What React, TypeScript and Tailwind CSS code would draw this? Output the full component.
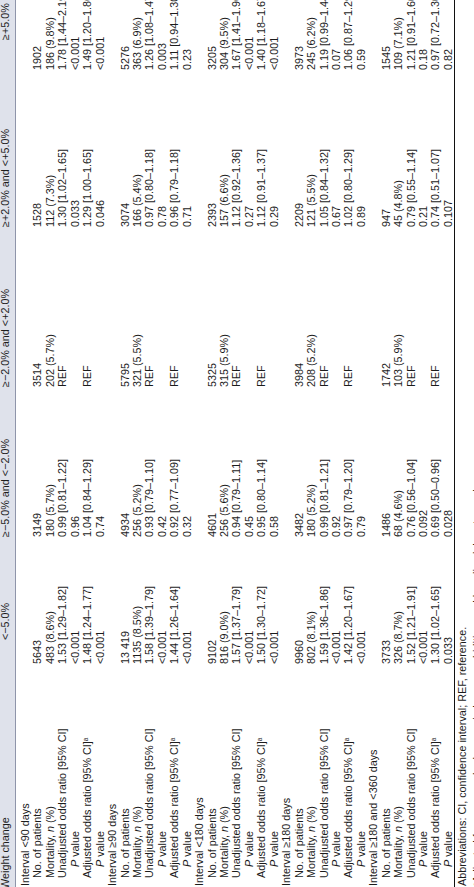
import React from 'react';

type Group = {
  title: React.ReactNode;
  cols: string[][];
};

const groups: Group[] = [
  {
    title: <>Interval &lt;90 days</>,
    cols: [
      ['5643', '483 (8.6%)', '1.53 [1.29–1.82]', '<0.001', '1.48 [1.24–1.77]', '<0.001'],
      ['3149', '180 (5.7%)', '0.99 [0.81–1.22]', '0.96', '1.04 [0.84–1.29]', '0.74'],
      ['3514', '202 (5.7%)', 'REF', '', 'REF', ''],
      ['1528', '112 (7.3%)', '1.30 [1.02–1.65]', '0.033', '1.29 [1.00–1.65]', '0.046'],
      ['1902', '186 (9.8%)', '1.78 [1.44–2.19]', '<0.001', '1.49 [1.20–1.86]', '<0.001'],
    ],
  },
  {
    title: <>Interval ≥90 days</>,
    cols: [
      ['13 419', '1135 (8.5%)', '1.58 [1.39–1.79]', '<0.001', '1.44 [1.26–1.64]', '<0.001'],
      ['4934', '256 (5.2%)', '0.93 [0.79–1.10]', '0.42', '0.92 [0.77–1.09]', '0.32'],
      ['5795', '321 (5.5%)', 'REF', '', 'REF', ''],
      ['3074', '166 (5.4%)', '0.97 [0.80–1.18]', '0.78', '0.96 [0.79–1.18]', '0.71'],
      ['5276', '363 (6.9%)', '1.26 [1.08–1.47]', '0.003', '1.11 [0.94–1.30]', '0.23'],
    ],
  },
  {
    title: <>Interval &lt;180 days</>,
    cols: [
      ['9102', '816 (9.0%)', '1.57 [1.37–1.79]', '<0.001', '1.50 [1.30–1.72]', '<0.001'],
      ['4601', '256 (5.6%)', '0.94 [0.79–1.11]', '0.45', '0.95 [0.80–1.14]', '0.58'],
      ['5325', '315 (5.9%)', 'REF', '', 'REF', ''],
      ['2393', '157 (6.6%)', '1.12 [0.92–1.36]', '0.27', '1.12 [0.91–1.37]', '0.29'],
      ['3205', '304 (9.5%)', '1.67 [1.41–1.96]', '<0.001', '1.40 [1.18–1.67]', '<0.001'],
    ],
  },
  {
    title: <>Interval ≥180 days</>,
    cols: [
      ['9960', '802 (8.1%)', '1.59 [1.36–1.86]', '<0.001', '1.42 [1.20–1.67]', '<0.001'],
      ['3482', '180 (5.2%)', '0.99 [0.81–1.21]', '0.92', '0.97 [0.79–1.20]', '0.79'],
      ['3984', '208 (5.2%)', 'REF', '', 'REF', ''],
      ['2209', '121 (5.5%)', '1.05 [0.84–1.32]', '0.67', '1.02 [0.80–1.29]', '0.89'],
      ['3973', '245 (6.2%)', '1.19 [0.99–1.44]', '0.07', '1.06 [0.87–1.29]', '0.59'],
    ],
  },
  {
    title: <>Interval ≥180 and &lt;360 days</>,
    cols: [
      ['3733', '326 (8.7%)', '1.52 [1.21–1.91]', '<0.001', '1.30 [1.02–1.65]', '0.033'],
      ['1486', '68 (4.6%)', '0.76 [0.56–1.04]', '0.092', '0.69 [0.50–0.96]', '0.028'],
      ['1742', '103 (5.9%)', 'REF', '', 'REF', ''],
      ['947', '45 (4.8%)', '0.79 [0.55–1.14]', '0.21', '0.74 [0.51–1.07]', '0.107'],
      ['1545', '109 (7.1%)', '1.21 [0.91–1.60]', '0.18', '0.97 [0.72–1.30]', '0.82'],
    ],
  },
];

// superscript footnote mark kept small so it stays inside its row
const Sup: React.FC = () => (
  <span className="relative -top-[3px] text-[6.5px] leading-none">a</span>
);

const rowLabels: React.ReactNode[] = [
  <span className="pl-[9px]">No. of patients</span>,
  <span className="pl-[9px]">
    Mortality, <i>n</i> (%)
  </span>,
  <span className="pl-[9px]">Unadjusted odds ratio [95% CI]</span>,
  <span className="pl-[20px]">
    <i>P</i> value
  </span>,
  <span className="pl-[9px]">
    Adjusted odds ratio [95% CI]
    <Sup />
  </span>,
  <span className="pl-[20px]">
    <i>P</i> value
  </span>,
];

const gridCols = 'grid grid-cols-[223px_127px_150px_160px_157px_140px]';

const WeightTable: React.FC = () => {
  return (
    <div className="w-[887px] h-[474px] bg-white text-[#1c1c1c] text-[10.8px] whitespace-nowrap origin-top-left -rotate-90 translate-y-[887px] font-['Liberation_Sans',Arial,sans-serif]">
      <div className={`${gridCols} h-[16px] leading-[11px] bg-[#dfe2eb] border-b border-[#8f95aa]`}>
        <div className="-ml-[2px]">Weight change</div>
        <div className="pl-[24px]">&lt;−5.0%</div>
        <div>≥−5.0% and &lt;−2.0%</div>
        <div>≥−2.0% and &lt;+2.0%</div>
        <div>≥+2.0% and &lt;+5.0%</div>
        <div className="pl-[30px]">≥+5.0%</div>
      </div>

      <div className="pt-[3px] border-b-[1.5px] border-[#111]">
        {groups.map((group, gi) => (
          <div key={gi}>
            <div className={`${gridCols} h-[12.45px] leading-[12.45px]`}>
              <div className="pl-[1px]">{group.title}</div>
            </div>
            {rowLabels.map((label, ri) => (
              <div key={ri} className={`${gridCols} h-[12.45px] leading-[12.45px]`}>
                <div>{label}</div>
                {group.cols.map((col, ci) => (
                  <div key={ci}>{col[ri]}</div>
                ))}
              </div>
            ))}
          </div>
        ))}
      </div>

      <div className="pt-[1px] leading-[12px]">
        <div className="pl-[1px]">Abbreviations: CI, confidence interval; REF, reference.</div>
        <div className="pl-[1px] pt-[3px]">
          <Sup />
          Adjusted for age, sex, body mass index, comorbidities, and baseline laboratory values.
        </div>
      </div>
    </div>
  );
};

const App: React.FC = () => {
  return (
    <div className="w-[474px] h-[887px] overflow-hidden bg-white">
      <WeightTable />
    </div>
  );
};

export default App;
